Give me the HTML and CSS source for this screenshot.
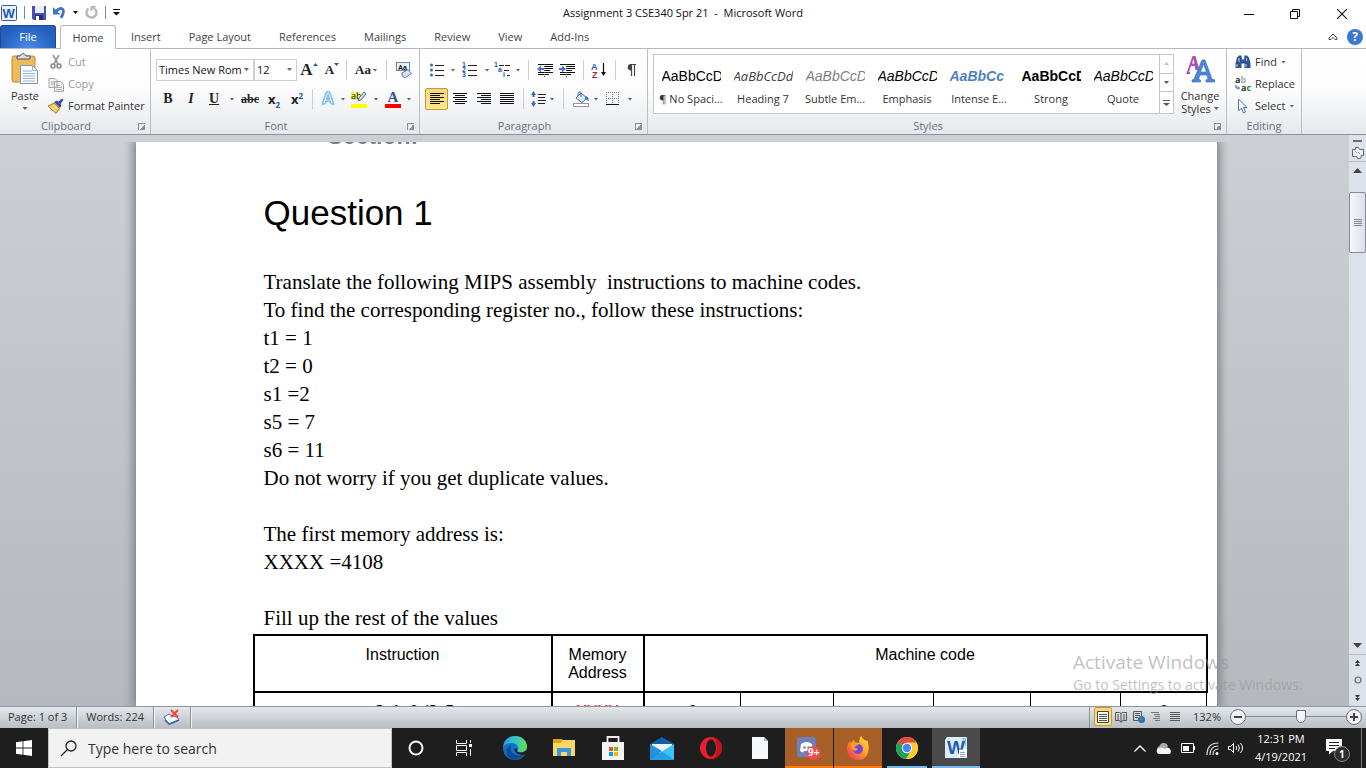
FILE: index.html
```
<!DOCTYPE html>
<html lang="en">
<head>
    <meta charset="UTF-8">
    <meta name="viewport" content="width=device-width, initial-scale=1.0">
    <title>Assignment 3 CSE340 Spr 21 - Microsoft Word</title>
    <link rel="stylesheet" href="styles.css">
</head>
<body>
    <!-- Title bar -->
    <header class="titlebar">
        <div class="quick">
            <svg width="16" height="16" viewBox="0 0 16 16"><rect x=".5" y=".5" width="15" height="15" rx="1" fill="#eaf3fc" stroke="#2a5fa8"/><text x="1.500" y="13" class="svg-w">W</text></svg>
            <span class="quick-line"></span>
            <button class="tool" aria-label="Save"><svg width="14" height="14" viewBox="0 0 14 14"><path d="M0 0h14v14H1.500L0 12.500z" fill="#4a50b8"/><rect x="3" y="0" width="9" height="7" fill="#e6effb"/><rect x="3" y="9" width="8" height="5" fill="#2a2d66"/><rect x="4" y="10" width="3" height="4" fill="#fff"/></svg></button>
            <button class="tool" aria-label="Undo"><svg width="13" height="14" viewBox="0 0 13 14"><path d="M3 5.500Q7 1 9.500 3T8 12" fill="none" stroke="#3f74cc" stroke-width="2.800"/><path d="M0 1v7.500h7.500z" fill="#3f74cc"/></svg></button>
            <span class="arrow dark"></span>
            <button class="tool" aria-label="Repeat"><svg width="13" height="14" viewBox="0 0 13 14"><path d="M3.500 2.500a5 5 0 1 0 6 0" fill="none" stroke="#b9b9b9" stroke-width="2.500"/><path d="M5.500 6V0h6z" fill="#b9b9b9"/></svg></button>
            <span class="quick-line"></span>
            <button class="tool" aria-label="Customize toolbar"><svg width="7" height="7" viewBox="0 0 7 7"><path d="M0 0h7v1H0zM0 3h7L3.500 6.500z" fill="#111"/></svg></button>
        </div>
        <h1 class="caption">Assignment 3 CSE340 Spr 21 &nbsp;-&nbsp; Microsoft Word</h1>
        <div class="window-buttons">
            <button aria-label="Minimize"><svg width="10" height="10" viewBox="0 0 10 10"><path d="M0 5.500h10" stroke="#111"/></svg></button>
            <button aria-label="Restore"><svg width="10" height="10" viewBox="0 0 10 10"><path d="M.5 2.500h7v7h-7zM2.500 2.500v-2h7v7h-2" fill="none" stroke="#111"/></svg></button>
            <button aria-label="Close"><svg width="10" height="10" viewBox="0 0 10 10"><path d="M0 0l10 10M10 0L0 10" stroke="#111" stroke-width="1.100"/></svg></button>
        </div>
    </header>

    <nav class="tabs">
        <button class="file-tab">File</button>
        <button class="tab active">Home</button>
        <button class="tab">Insert</button>
        <button class="tab">Page Layout</button>
        <button class="tab">References</button>
        <button class="tab">Mailings</button>
        <button class="tab">Review</button>
        <button class="tab">View</button>
        <button class="tab">Add-Ins</button>
        <div class="tab-end">
            <button class="tool" aria-label="Minimize the ribbon"><svg width="10" height="8" viewBox="0 0 10 8"><path d="M1 5l4-4 4 4v1.500H7L5 4.500l-2 2H1z" fill="#fff" stroke="#444"/></svg></button>
            <button class="help" aria-label="Help">?</button>
        </div>
    </nav>

    <!-- Ribbon -->
    <section class="ribbon">
        <div class="group clipboard">
            <div class="group-body side">
                <button class="big-button paste">
                    <svg width="28" height="32" viewBox="0 0 28 32"><rect x="1" y="3" width="23" height="26" rx="2" fill="#eebb5c" stroke="#c08a2d"/><path d="M6 6V3h3q3-5 6 0h4v3z" fill="#d9dde2" stroke="#555"/><path d="M9.500 12.500h12l5 5v13h-17z" fill="#fafcff" stroke="#7d93b5"/><path d="M21.500 12.500v5h5M12 18h9M12 20.500h12M12 23h12M12 25.500h12M12 28h12" fill="none" stroke="#9db4d6"/></svg>
                    <span>Paste</span>
                    <span class="arrow"></span>
                </button>
                <div class="rows">
                    <button class="row-button disabled"><svg width="16" height="16" viewBox="0 0 16 16"><path d="M5 1l5 9M11 1l-5 9" stroke="#999" stroke-width="1.600"/><circle cx="5" cy="12" r="2" fill="none" stroke="#888" stroke-width="1.500"/><circle cx="11" cy="12" r="2" fill="none" stroke="#888" stroke-width="1.500"/></svg>Cut</button>
                    <button class="row-button disabled"><svg width="16" height="16" viewBox="0 0 16 16"><path d="M1 2.500h6l2 2v7H1zM6.500 5.500h6l3 3v7h-9z" fill="#f3f3f3" stroke="#a5a5a5"/><path d="M3 6h3M3 8h3M8 9.500h4M8 11.500h6M8 13.500h6" stroke="#aaa"/></svg>Copy</button>
                    <button class="row-button"><svg width="16" height="16" viewBox="0 0 16 16"><path d="M10 4l4-3.500 1.500 1.500-3 4z" fill="#41459b"/><path d="M6 4l3-1.500L13.500 7 12 10z" fill="#41459b"/><path d="M0 8l6-3 5.500 5.500L8 15.500z" fill="#e8cb58" stroke="#a48325"/><path d="M3 8.500l5 5M5.500 7l4 4.500" stroke="#fff6c4"/></svg>Format Painter</button>
                </div>
            </div>
            <div class="group-label">Clipboard<button class="launcher" aria-label="Clipboard options"></button></div>
        </div>

        <div class="group font">
            <div class="group-body">
                <div class="tools font-top">
                    <span class="combo"><select aria-label="Font"><option>Times New Roman</option></select><i class="arrow"></i></span>
                    <span class="combo"><select aria-label="Font size"><option>12</option></select><i class="arrow"></i></span>
                    <button class="tool serif grow" aria-label="Grow font">A<svg width="5" height="3" viewBox="0 0 5 3"><path d="M0 3h5L2.500 0z" fill="#2b57a6"/></svg></button>
                    <button class="tool serif shrink" aria-label="Shrink font">A<svg width="5" height="3" viewBox="0 0 5 3"><path d="M0 0h5L2.500 3z" fill="#2b57a6"/></svg></button>
                    <span class="sep"></span>
                    <button class="tool serif case">Aa</button><span class="arrow"></span>
                    <span class="sep"></span>
                    <button class="tool" aria-label="Clear formatting"><svg width="18" height="18" viewBox="0 0 18 18"><rect x="1.500" y="1.500" width="13" height="8" fill="#eef4fd" stroke="#6d87b5"/><text x="3" y="8.500" class="svg-tiny">Aa</text><path d="M7 12l6-3.500 3.500 4-6 4q-4 0-3.500-4.500z" fill="#d5e0f5" stroke="#6579a5"/></svg></button>
                </div>
                <div class="tools font-bottom">
                    <button class="tool serif bold">B</button>
                    <button class="tool serif italic">I</button>
                    <button class="tool serif under">U</button><span class="arrow"></span>
                    <button class="tool serif strike">abc</button>
                    <button class="tool script">x<sub>2</sub></button>
                    <button class="tool script">x<sup>2</sup></button>
                    <span class="sep"></span>
                    <button class="tool effects">A</button><span class="arrow"></span>
                    <button class="tool" aria-label="Highlight"><svg width="18" height="18" viewBox="0 0 18 18"><rect x="1" y="2" width="9" height="8" fill="#f4f06a"/><text x="1" y="9" class="svg-small">ab</text><path d="M8 11l1-3 5-6 2 2-5 6z" fill="#cfdbef" stroke="#5c6d8c"/><rect x="1" y="14" width="16" height="4" fill="#ffff00"/></svg></button><span class="arrow"></span>
                    <button class="tool font-color">A</button><span class="arrow"></span>
                </div>
            </div>
            <div class="group-label">Font<button class="launcher" aria-label="Font options"></button></div>
        </div>

        <div class="group paragraph">
            <div class="group-body">
                <div class="tools para-top">
                    <button class="tool" aria-label="Bullets"><svg width="14" height="14" viewBox="0 0 14 14"><g fill="#3a64ad"><circle cx="1.500" cy="2" r="1.500"/><circle cx="1.500" cy="7" r="1.500"/><circle cx="1.500" cy="12" r="1.500"/></g><path d="M5 2.500h9M5 7.500h9M5 12.500h9" stroke="#222"/></svg></button><span class="arrow"></span>
                    <button class="tool" aria-label="Numbering"><svg width="16" height="16" viewBox="0 0 16 16"><g class="svg-num"><text x="0" y="5">1</text><text x="0" y="10">2</text><text x="0" y="15">3</text></g><path d="M6 3.500h9M6 8.500h9M6 13.500h9" stroke="#222"/></svg></button><span class="arrow"></span>
                    <button class="tool" aria-label="Multilevel list"><svg width="18" height="16" viewBox="0 0 18 16"><g class="svg-num"><text x="0" y="5">1</text><text x="4" y="10">a</text><text x="9" y="15">i</text></g><path d="M5 3.500h12M10 8.500h6M13 13.500h3" stroke="#222" stroke-dasharray="5 1"/></svg></button><span class="arrow"></span>
                    <span class="sep"></span>
                    <button class="tool" aria-label="Decrease indent"><svg width="16" height="14" viewBox="0 0 16 14"><path d="M1 1.500h15M8 3.500h8M8 5.500h8M8 7.500h5M1 9.500h15M1 11.500h11" stroke="#111"/><path d="M7.500 1v13" stroke="#444" stroke-dasharray="1 1"/><path d="M0 6l4-3.500V5h3v2H4v2.500z" fill="#3e78d8"/></svg></button>
                    <button class="tool" aria-label="Increase indent"><svg width="16" height="14" viewBox="0 0 16 14"><path d="M1 1.500h15M8 3.500h8M8 5.500h8M8 7.500h5M1 9.500h15M1 11.500h11" stroke="#111"/><path d="M7.500 1v13" stroke="#444" stroke-dasharray="1 1"/><path d="M7 6L3 2.500V5H0v2h3v2.500z" fill="#3e78d8"/></svg></button>
                    <span class="sep"></span>
                    <button class="tool" aria-label="Sort"><svg width="16" height="16" viewBox="0 0 16 16"><text x="0" y="8" class="svg-az">A</text><text x="1" y="16" class="svg-az red">Z</text><path d="M12.500 1v11" stroke="#111" stroke-width="1.200"/><path d="M10 10h5l-2.500 4z" fill="#111"/></svg></button>
                    <span class="sep"></span>
                    <button class="tool" aria-label="Show marks"><svg width="12" height="14" viewBox="0 0 12 14"><path d="M11 1.500H5M6.500 1v12M9.500 1v12" stroke="#444" stroke-width="1.200"/><path d="M6 1a3 3 0 0 0 0 6.500z" fill="#444"/></svg></button>
                </div>
                <div class="tools para-bottom">
                    <button class="tool chosen" aria-label="Align left"><svg width="14" height="12" viewBox="0 0 14 12"><path d="M0 .5h14M0 2.500h10M0 4.500h14M0 6.500h10M0 8.500h14M0 10.500h10" stroke="#111"/></svg></button>
                    <button class="tool" aria-label="Center"><svg width="14" height="12" viewBox="0 0 14 12"><path d="M0 .5h14M2 2.500h10M0 4.500h14M2 6.500h10M0 8.500h14M2 10.500h10" stroke="#111"/></svg></button>
                    <button class="tool" aria-label="Align right"><svg width="14" height="12" viewBox="0 0 14 12"><path d="M0 .5h14M4 2.500h10M0 4.500h14M4 6.500h10M0 8.500h14M4 10.500h10" stroke="#111"/></svg></button>
                    <button class="tool" aria-label="Justify"><svg width="14" height="12" viewBox="0 0 14 12"><path d="M0 .5h14M0 2.500h14M0 4.500h14M0 6.500h14M0 8.500h14M0 10.500h14" stroke="#111"/></svg></button>
                    <span class="sep"></span>
                    <button class="tool" aria-label="Line spacing"><svg width="15" height="16" viewBox="0 0 15 16"><path d="M2.500 0L5 4H3.500v2h-2V4H0zM2.500 16L5 12H3.500v-2h-2v2H0z" fill="#3765b5"/><path d="M7 3.500h8M7 6.500h7M7 9.500h8M7 12.500h7" stroke="#222"/></svg></button><span class="arrow"></span>
                    <span class="sep"></span>
                    <button class="tool" aria-label="Shading"><svg width="17" height="16" viewBox="0 0 17 16"><path d="M3 7l5-5 6 5-5 4.500z" fill="#dfe9f8" stroke="#49648f"/><path d="M8 6V1.500q-2-2-3 1V5" fill="none" stroke="#49648f"/><path d="M12.500 5q4 1 3 5.500Q14 8 12 8z" fill="#3b6fc0"/><rect x=".5" y="12.500" width="15" height="3" fill="#fff" stroke="#999"/></svg></button><span class="arrow"></span>
                    <button class="tool" aria-label="Borders"><svg width="14" height="14" viewBox="0 0 14 14"><path d="M0 .5h13M0 6.500h13M.5 0v13M6.500 0v13M12.500 0v13" stroke="#777" stroke-dasharray="1 1"/><path d="M0 12.500h13" stroke="#111"/></svg></button><span class="arrow"></span>
                </div>
            </div>
            <div class="group-label">Paragraph<button class="launcher" aria-label="Paragraph options"></button></div>
        </div>

        <div class="group styles">
            <div class="group-body side">
                <div class="gallery">
                    <button class="style"><span class="sample">AaBbCcDd</span><span>¶ No Spaci...</span></button>
                    <button class="style"><span class="sample heading7">AaBbCcDd</span><span>Heading 7</span></button>
                    <button class="style"><span class="sample subtle">AaBbCcDd</span><span>Subtle Em...</span></button>
                    <button class="style"><span class="sample emphasis">AaBbCcDd</span><span>Emphasis</span></button>
                    <button class="style"><span class="sample intense">AaBbCc</span><span>Intense E...</span></button>
                    <button class="style"><span class="sample strong">AaBbCcD</span><span>Strong</span></button>
                    <button class="style"><span class="sample emphasis">AaBbCcDd</span><span>Quote</span></button>
                    <div class="gallery-nav">
                        <button aria-label="Previous row"><svg width="5" height="3" viewBox="0 0 5 3"><path d="M0 3h5L2.500 0z" fill="#bbb"/></svg></button>
                        <button aria-label="Next row"><svg width="5" height="3" viewBox="0 0 5 3"><path d="M0 0h5L2.500 3z" fill="#555"/></svg></button>
                        <button aria-label="More styles"><svg width="7" height="6" viewBox="0 0 7 6"><path d="M0 0h7v1H0zM0 3h7L3.500 6z" fill="#555"/></svg></button>
                    </div>
                </div>
                <button class="big-button change">
                    <svg width="30" height="30" viewBox="0 0 30 30"><path d="M1 20l1-2 5.500-16h3l4 14h-4l-.8-4H6l-2 6h1v2zM7 9.500h2.500L8.500 5z" fill="#b04fb5" fill-rule="evenodd"/><path d="M7 28v-2l2-1 8-19h3l7 19 3 1v2h-9v-2l2-1-1-4h-7l-1.500 4 2 1v2zM15.500 18h6l-3-8z" fill="#4d86d8" stroke="#3466b8" stroke-width=".6" fill-rule="evenodd"/></svg>
                    <span>Change</span>
                    <span class="with-arrow">Styles <i class="arrow"></i></span>
                </button>
            </div>
            <div class="group-label">Styles<button class="launcher" aria-label="Style options"></button></div>
        </div>

        <div class="group editing">
            <div class="group-body side">
                <div class="rows">
                    <button class="row-button"><svg width="16" height="16" viewBox="0 0 16 16"><path d="M2 3.500L4 1.500h2.500l.5 4h2l.5-4H12l2 2 1.500 6V14h-6V9.500h-3V14h-6V9.500z" fill="#2f5391"/><path d="M2 10v3M4 4v4M11 10v3M11.500 4v3" stroke="#a9c2e8" stroke-width="1.200"/></svg>Find<i class="arrow"></i></button>
                    <button class="row-button"><svg width="16" height="16" viewBox="0 0 16 16"><text x="0" y="7" class="svg-rep">a<tspan fill="#aaa">b</tspan></text><text x="6" y="15" class="svg-rep">a<tspan fill="#19901f">c</tspan></text><path d="M1 9v3h3M3 10.500L4.500 12 3 13.500" fill="none" stroke="#2c5ca6"/></svg>Replace</button>
                    <button class="row-button"><svg width="16" height="16" viewBox="0 0 16 16"><path d="M3.500 1v12l3-3 2 5 2-1-2-4.500h3.500z" fill="#f5f9ff" stroke="#54739f"/></svg>Select<i class="arrow"></i></button>
                </div>
            </div>
            <div class="group-label">Editing</div>
        </div>
    </section>

    <!-- Document -->
    <main class="workspace">
        <div class="canvas">
            <article class="page">
                <p class="section-line">Section:</p>
                <h2>Question 1</h2>
                <p>Translate the following MIPS assembly &nbsp;instructions to machine codes.</p>
                <p>To find the corresponding register no., follow these instructions:</p>
                <p>t1 = 1</p>
                <p>t2 = 0</p>
                <p>s1 =2</p>
                <p>s5 = 7</p>
                <p>s6 = 11</p>
                <p>Do not worry if you get duplicate values.</p>
                <p class="gap">The first memory address is:</p>
                <p>XXXX =4108</p>
                <p class="gap">Fill up the rest of the values</p>
                <table>
                    <colgroup><col class="c-inst"><col class="c-mem"><col class="c-1"><col class="c-2"><col class="c-3"><col class="c-4"><col class="c-5"><col class="c-6"></colgroup>
                    <tr class="head"><th>Instruction</th><th>Memory Address</th><th colspan="6">Machine code</th></tr>
                    <tr><td>sw $s1, 0 ($s5</td><td class="red">XXXX</td><td>6</td><td></td><td></td><td></td><td></td><td>6</td></tr>
                </table>
            </article>
        </div>
        <div class="scrollbar">
            <span class="split"></span>
            <button class="ruler" aria-label="View ruler"><svg width="12" height="12" viewBox="0 0 12 12"><path d="M.5 2.500h3v-2h3l1 2h4v6h-2l-1 3h-3l-1-2h-4z" fill="#eef0f5" stroke="#666"/><path d="M3 4l2 2M6 5l3 3" stroke="#666" stroke-dasharray="1 1"/></svg></button>
            <button class="step" aria-label="Scroll up"><svg width="9" height="5" viewBox="0 0 9 5"><path d="M0 5h9L4.500 0z" fill="#444"/></svg></button>
            <div class="track"><div class="thumb"></div></div>
            <button class="step" aria-label="Scroll down"><svg width="9" height="5" viewBox="0 0 9 5"><path d="M0 0h9L4.500 5z" fill="#444"/></svg></button>
            <div class="browse">
                <button aria-label="Previous page"><svg width="5" height="6" viewBox="0 0 5 6"><path d="M0 3h5L2.500 0zM0 6h5L2.500 3z" fill="#333"/></svg></button>
                <button aria-label="Browse object"><svg width="8" height="8" viewBox="0 0 8 8"><circle cx="4" cy="4" r="3" fill="none" stroke="#666" stroke-width="1.200"/></svg></button>
                <button aria-label="Next page"><svg width="5" height="6" viewBox="0 0 5 6"><path d="M0 0h5L2.500 3zM0 3h5L2.500 6z" fill="#333"/></svg></button>
            </div>
        </div>
        <div class="watermark"><strong>Activate Windows</strong><span>Go to Settings to activate Windows.</span></div>
    </main>

    <footer class="statusbar">
        <button class="status">Page: 1 of 3</button>
        <button class="status">Words: 224</button>
        <button class="status proof" aria-label="Proofing errors"><svg width="18" height="16" viewBox="0 0 18 16"><path d="M1 8l5-3 3 2 5 1 2 3-8 4-3-1z" fill="#fff" stroke="#4a76bb"/><path d="M2 11l4 4 10-4" fill="none" stroke="#3668b8" stroke-width="1.500"/><path d="M8 1l7 7M15 1L8 8" stroke="#f04a2c" stroke-width="2"/></svg></button>
        <div class="views">
            <button class="view chosen" aria-label="Print layout"><svg width="12" height="12" viewBox="0 0 12 12"><path d="M.5.5h11v11H.5z" fill="#fff" stroke="#444"/><path d="M2 3.500h8M2 5.500h8M2 7.500h8M2 9.500h8" stroke="#555"/></svg></button>
            <button class="view" aria-label="Full screen reading"><svg width="12" height="12" viewBox="0 0 12 12"><path d="M.5 1.500h4l1.500 1 1.500-1h4v8h-4l-1.500 2-1.500-2h-4zM6 2v9M2 4h2M2 6h2M2 8h2M8 4h2M8 6h2M8 8h2" fill="none" stroke="#555"/></svg></button>
            <button class="view" aria-label="Web layout"><svg width="12" height="12" viewBox="0 0 12 12"><path d="M.5.5h8v9h-8zM2 2.500h5M2 4.500h5M2 6.500h3" fill="none" stroke="#555"/><circle cx="8.500" cy="8.500" r="3.500" fill="#2f6cb5"/><path d="M7 7l2-1 1 2-2 2z" fill="#43a047"/></svg></button>
            <button class="view" aria-label="Outline"><svg width="12" height="12" viewBox="0 0 12 12"><path d="M0 1.500h8M3 3.500h6M4 5.500h5M2 7.500h7M4 9.500h5" stroke="#777"/></svg></button>
            <button class="view" aria-label="Draft"><svg width="12" height="12" viewBox="0 0 12 12"><path d="M1 1.500h10M1 3.500h10M1 5.500h10M1 7.500h10M1 9.500h10" stroke="#555"/></svg></button>
            <button class="zoom">132%</button>
            <button class="round" aria-label="Zoom out"><svg width="8" height="8" viewBox="0 0 8 8"><path d="M0 4h8" stroke="#444" stroke-width="2"/></svg></button>
            <input type="range" min="0" max="100" value="56" aria-label="Zoom">
            <button class="round" aria-label="Zoom in"><svg width="8" height="8" viewBox="0 0 8 8"><path d="M0 4h8M4 0v8" stroke="#444" stroke-width="2"/></svg></button>
        </div>
    </footer>

    <!-- Windows taskbar -->
    <div class="taskbar">
        <button class="start" aria-label="Start"><svg width="16" height="16" viewBox="0 0 16 16"><path d="M0 2.200L6.600 1.300v6.200H0zM7.400 1.200L16 0v7.500H7.400zM0 8.400h6.600v6.300L0 13.800zM7.400 8.400H16V16l-8.600-1.200z" fill="#fff"/></svg></button>
        <div class="search">
            <svg width="17" height="17" viewBox="0 0 17 17"><circle cx="11" cy="6" r="5" fill="none" stroke="#222" stroke-width="1.300"/><path d="M7.500 9.500L1 16" stroke="#222" stroke-width="1.300"/></svg>
            <input type="text" placeholder="Type here to search" aria-label="Search">
        </div>
        <button class="sys" aria-label="Cortana"><svg width="16" height="16" viewBox="0 0 16 16"><circle cx="8" cy="8" r="6.500" fill="none" stroke="#fff" stroke-width="2"/></svg></button>
        <button class="sys" aria-label="Task view"><svg width="16" height="16" viewBox="0 0 16 16"><path d="M.5 0v3.500h10V0M.5 16v-3.500h10V16M.5 5.500h10v5H.5zM14.500 0v3M14.500 9v7" fill="none" stroke="#fff"/><rect x="13" y="4" width="3" height="3" fill="#fff"/></svg></button>
        <div class="apps">
            <button class="app" aria-label="Edge"><svg width="24" height="24" viewBox="0 0 24 24"><defs><linearGradient id="edgeTop" x1="0" x2="1"><stop offset="0" stop-color="#2a9fe0"/><stop offset=".5" stop-color="#35c1c9"/><stop offset="1" stop-color="#6ae04b"/></linearGradient></defs><circle cx="12" cy="12" r="12" fill="#1371c5"/><path d="M0 11C1 4 6 0 12 0c7 0 12 5 12 10.500 0 4-3 6-6.500 6-2.500 0-4-1-3-2.500 2-3-1-7-6-7-4 0-7 2-8.500 4z" fill="url(#edgeTop)"/><path d="M8 9c-2 7 3 12 13 10-5 6-14 6-17 0-2-4 0-8 4-10z" fill="#0d4b97"/><path d="M14.500 14c-1 1.500 1 2.500 3 2.500 2.500 0 4.500-1 6-3v4l-2.500 1.500c-5 0-9-2-9.500-5 0-2 3-2 3 0z" fill="#1f1f1f"/></svg></button>
            <button class="app" aria-label="File Explorer"><svg width="22" height="20" viewBox="0 0 22 20"><path d="M0 1h9l2 2h11v15H0z" fill="#e3a21a"/><path d="M0 5h8l2-3h12v16H0z" fill="#ffd869"/><path d="M4 18v-8h14v8h-4v-4H8v4z" fill="#3a97dc"/></svg></button>
            <button class="app" aria-label="Store"><svg width="24" height="24" viewBox="0 0 24 24"><path d="M6.500 7V1h11v6" fill="none" stroke="#f0f0f0" stroke-width="1.800"/><path d="M1 6h22v18H1z" fill="#f3f3f3"/><path d="M8 11h4v4H8z" fill="#f05125"/><path d="M13 11h4v4h-4z" fill="#7fbb00"/><path d="M8 16h4v4H8z" fill="#00a3ee"/><path d="M13 16h4v4h-4z" fill="#fdb900"/></svg></button>
            <button class="app" aria-label="Mail"><svg width="24" height="23" viewBox="0 0 24 23"><path d="M0 7l12-7 12 7v16H0z" fill="#0f5fae"/><path d="M2 7h20v9H2z" fill="#f2f2f2"/><path d="M0 7l12 7L0 23z" fill="#1f92e0"/><path d="M24 7v16H0l12-8.500z" fill="#36c3f5"/><path d="M12 14.500L24 23H0z" fill="#239fe6"/></svg></button>
            <button class="app" aria-label="Opera"><svg width="22" height="22" viewBox="0 0 22 22"><path d="M11 0a11 11 0 1 0 0 22 11 11 0 0 0 0-22zm0 2.500c2.800 0 5 4 5 8.500s-2.200 8.500-5 8.500-5-4-5-8.500 2.200-8.500 5-8.500z" fill="#ee1c2c" fill-rule="evenodd"/><path d="M13 0.200c6 1 9 5.800 9 10.800s-3 9.800-9 10.800c2.500-2 4-6 4-10.800S15.500 2.200 13 .2z" fill="#a50d1b" opacity=".6"/></svg></button>
            <button class="app" aria-label="Document"><svg width="16" height="22" viewBox="0 0 16 22"><path d="M0 0h12l4 4v18H0z" fill="#f6f7f9"/><path d="M12 0v4h4z" fill="#aeb4bb"/></svg></button>
            <button class="app alert" aria-label="Discord"><svg width="24" height="24" viewBox="0 0 24 24"><rect x="0" y="1" width="19" height="20" rx="3" fill="#6b80bd"/><path d="M4 8q5.500-4 11 0l1 7-3 1.500-1-1.500H7l-1 1.500L3 15z" fill="#fff"/><circle cx="7.500" cy="11.500" r="1.300" fill="#6b80bd"/><circle cx="11.500" cy="11.500" r="1.300" fill="#6b80bd"/><circle cx="16.500" cy="17" r="7" fill="#f04b4e"/><text x="11" y="20" class="svg-badge">9+</text></svg></button>
            <button class="app alert" aria-label="Firefox"><svg width="24" height="24" viewBox="0 0 24 24"><defs><linearGradient id="fox" x1="1" y1="0" x2="0" y2="1"><stop offset="0" stop-color="#ffe94a"/><stop offset=".5" stop-color="#ff9226"/><stop offset="1" stop-color="#f0256c"/></linearGradient></defs><path d="M12 24C5 24 1 19 1 13.500c0-4 1-6 2.500-8.500l1 2L8 3.500 8.500 6 13 7l1-6 1.500-1c1 4 3 3 5 5l.5-1c3 6 3 20-9 20z" fill="url(#fox)"/><circle cx="12" cy="13" r="5" fill="#7146e0"/><path d="M5 7q5-1 8 2-4 0-4 3 2 0 3 1-2 3-5 1-3-3-2-7z" fill="#ff9b2d"/></svg></button>
            <button class="app running" aria-label="Chrome"><svg width="22" height="22" viewBox="0 0 22 22"><circle cx="11" cy="11" r="11" fill="#fbcb2f"/><path d="M11 11L1.500 5.500a11 11 0 0 1 19 0z" fill="#dd4b3e"/><path d="M1.500 5.500a11 11 0 0 0 8.500 16.500l5.500-8.500L11 11z" fill="#1da361"/><path d="M10 22a11 11 0 0 0 10.500-16.500H11v5.500l4.500 2.500z" fill="#fbcb2f"/><circle cx="11" cy="11" r="5.200" fill="#fff"/><circle cx="11" cy="11" r="4.200" fill="#4587f4"/></svg></button>
            <button class="app current" aria-label="Word"><svg width="22" height="22" viewBox="0 0 22 22"><path d="M2 0h19q1 0 1 1v20H0V3z" fill="#dcecfb"/><path d="M17 1h4v9z" fill="#8fc1ee"/><text x="2" y="17" class="svg-w big">W</text><path d="M14 13l8-1v9h-8z" fill="#fff"/><path d="M15 15.500h5M15 17.500h5M15 19.500h5" stroke="#89aede"/></svg></button>
        </div>
        <div class="tray">
            <button aria-label="Hidden icons"><svg width="12" height="7" viewBox="0 0 12 7"><path d="M.5 6.500L6 1l5.500 5.500" fill="none" stroke="#fff" stroke-width="1.300"/></svg></button>
            <button aria-label="OneDrive"><svg width="16" height="11" viewBox="0 0 16 11"><path d="M2 8a3 3 0 0 1 1.500-5A4.500 4.500 0 0 1 12 3l-2 3z" fill="#aaa"/><path d="M3.500 11a3 3 0 0 1 .5-6q2-1 4.500 1l3-1.500A4 4 0 0 1 14 11z" fill="#f4f4f4"/></svg></button>
            <button aria-label="Battery"><svg width="15" height="10" viewBox="0 0 15 10"><path d="M.5.500h12v9H.5zM13.500 3v4" fill="none" stroke="#fff"/><rect x="2" y="3" width="6" height="5" fill="#fff"/></svg></button>
            <button aria-label="Network"><svg width="13" height="13" viewBox="0 0 13 13"><path d="M1 13Q1 1 12.500 1M4 13Q4 4 12.500 4M7 13q0-6 5.500-6" fill="none" stroke="#ddd" stroke-width="1.200"/><circle cx="11" cy="11.500" r="1.500" fill="#fff"/></svg></button>
            <button aria-label="Volume"><svg width="16" height="12" viewBox="0 0 16 12"><path d="M.5 4.500h2l3-3v9l-3-3h-2zM8 4q1.500 2 0 4M10 2.500q3 3.500 0 7M12.500 1q4 5 0 10" fill="none" stroke="#fff"/></svg></button>
            <div class="clock"><span>12:31 PM</span><span>4/19/2021</span></div>
            <button class="notify" aria-label="Notifications"><svg width="26" height="26" viewBox="0 0 26 26"><path d="M1 2h16v12H8l-4 3.500V14H1z" fill="#fff"/><path d="M4 5.500h10M4 8.500h10M4 11.500h6" stroke="#222"/><circle cx="17" cy="17" r="7.500" fill="#2d2d2d" stroke="#8b8b8b"/><text x="14" y="21" class="svg-badge">1</text></svg></button>
            <span class="peek"></span>
        </div>
    </div>
</body>
</html>
```

FILE: styles.css
```
* {
    box-sizing: border-box;
}

body {
    margin: 0;
    height: 100vh;
    display: flex;
    flex-direction: column;
    overflow: hidden;
    background: #fff;
    font-family: "Open Sans", "Noto Sans", sans-serif;
    font-size: 11px;
    line-height: 14px;
    color: #333;
}

button {
    margin: 0;
    padding: 0;
    border: 0;
    background: none;
    font: inherit;
    color: inherit;
    white-space: nowrap;
}

svg {
    display: block;
    flex: none;
}

.arrow {
    width: 5px;
    height: 3px;
    flex: none;
    justify-self: center;
    background: #666;
    clip-path: polygon(0 0, 100% 0, 50% 100%);
}

.arrow.dark {
    background: #111;
}

.tool {
    display: flex;
    align-items: center;
    justify-content: center;
    height: 22px;
}

/* title bar */
.titlebar {
    flex: none;
    height: 25px;
    display: grid;
    grid-template-columns: 1fr auto 1fr;
}

.quick {
    display: flex;
    align-items: center;
    gap: 7px;
    padding-left: 1px;
}

.quick-line {
    width: 1px;
    height: 13px;
    background: #888;
}

.caption {
    margin: 0;
    font-size: 11px;
    font-weight: 400;
    line-height: 25px;
    color: #111;
}

.window-buttons {
    display: flex;
    justify-content: flex-end;
}

.window-buttons button {
    width: 46px;
    display: grid;
    place-items: center;
    padding-top: 3px;
}

.window-buttons button:last-child {
    width: 48px;
}

/* ribbon tabs */
.tabs {
    flex: none;
    height: 24px;
    display: flex;
    align-items: stretch;
    border-bottom: 1px solid #b4b9bf;
}

.file-tab {
    width: 56px;
    margin-right: 4px;
    border: 1px solid #1d489b;
    border-bottom: 0;
    border-radius: 3px 3px 0 0;
    background: radial-gradient(ellipse at bottom, #4a8bea, #2560bd 70%);
    color: #fff;
}

.tab {
    padding: 0 14px;
    color: #444;
}

.tab.active {
    width: 56px;
    margin: 0 1px -1px 0;
    padding: 0;
    border: 1px solid #b4b9bf;
    border-bottom: 0;
    border-radius: 3px 3px 0 0;
    background: #fff;
}

.tab-end {
    display: flex;
    align-items: center;
    gap: 9px;
    margin-left: auto;
    padding-right: 3px;
}

.help {
    width: 16px;
    height: 16px;
    border-radius: 50%;
    background: #3c78d0;
    color: #fff;
    font-weight: 700;
    font-size: 12px;
}

/* ribbon */
.ribbon {
    flex: none;
    height: 86px;
    display: flex;
    border-bottom: 1px solid #8b929c;
    background: linear-gradient(#fff 0, #fdfdfe 45%, #e5e8ec 100%);
}

.group {
    display: flex;
    flex-direction: column;
    flex: none;
    border-right: 1px solid #b9bec5;
}

.clipboard { width: 151px; }
.font { width: 269px; }
.paragraph { width: 228px; }
.styles { width: 579px; }
.editing { width: 75px; }

.group-body {
    flex: 1;
    min-height: 0;
    display: flex;
    flex-direction: column;
    gap: 7px;
    padding: 10px 0 0 5px;
}

.group-body.side {
    flex-direction: row;
    gap: 0;
    padding-top: 2px;
}

.group-label {
    position: relative;
    flex: none;
    height: 17px;
    padding-right: 18px;
    text-align: center;
    line-height: 17px;
    color: #6a707a;
}

.editing .group-label {
    padding-right: 0;
}

.launcher {
    position: absolute;
    right: 5px;
    bottom: 4px;
    width: 7px;
    height: 7px;
    border-top: 1px solid #8a8f97;
    border-left: 1px solid #8a8f97;
    background: linear-gradient(135deg, transparent 50%, #8a8f97 50%);
}

.big-button {
    display: flex;
    flex-direction: column;
    align-items: center;
    align-self: flex-start;
}

.paste {
    width: 40px;
    padding-top: 2px;
}

.paste .arrow {
    margin-top: 4px;
}

.paste span:first-of-type {
    margin-top: 4px;
}

.rows {
    display: flex;
    flex-direction: column;
    padding-left: 3px;
}

.row-button {
    display: flex;
    align-items: center;
    gap: 4px;
    height: 22px;
}

.disabled {
    color: #999;
}

.tools {
    display: grid;
    align-items: center;
}

.font-top { grid-template-columns: 98px 43px 24px 22px 7px 21px 8px 14px 22px; }
.font-bottom { grid-template-columns: 24px 22px 24px 12px 24px 24px 22px 9px 22px 8px 24px 10px 24px 8px; }
.para-top { grid-template-columns: 24px 8px 26px 8px 23px 8px 12px 22px 22px 10px 22px 10px 22px; }
.para-bottom { grid-template-columns: 23px 24px 24px 22px 10px 20px 8px 14px 22px 8px 26px 8px; }

.sep {
    width: 1px;
    height: 20px;
    justify-self: center;
    background: #c9ced5;
}

.combo {
    position: relative;
    height: 22px;
}

.combo select {
    appearance: none;
    width: 100%;
    height: 22px;
    padding: 0 11px 0 2px;
    border: 1px solid #ccd0d5;
    border-radius: 0;
    background: #fff;
    font: inherit;
    color: #111;
}

.combo .arrow {
    position: absolute;
    right: 5px;
    top: 9px;
}

.serif {
    font-family: "Liberation Serif", serif;
    font-weight: 700;
    font-size: 14px;
    color: #222;
}

.grow { font-size: 17px; }
.shrink { font-size: 13px; }

.grow svg,
.shrink svg {
    align-self: flex-start;
    margin-top: 4px;
}

.case {
    justify-content: flex-end;
    font-size: 13px;
}

.italic { font-style: italic; }
.under { text-decoration: underline; }

.strike {
    font-size: 12px;
    text-decoration: line-through;
}

.script {
    font-weight: 700;
    font-size: 13px;
    color: #222;
}

.script sub,
.script sup {
    font-size: 8px;
    line-height: 8px;
    color: #2b57a6;
}

.script sub {
    align-self: flex-end;
    padding-bottom: 1px;
}

.script sup {
    align-self: flex-start;
    padding-top: 4px;
}

.effects {
    font-family: "Liberation Sans", sans-serif;
    font-weight: 700;
    font-size: 17px;
    color: #fff;
    -webkit-text-stroke: 1px #6fb0dd;
    text-shadow: 0 0 3px #7cc4ee;
}

.font-color {
    justify-self: center;
    width: 16px;
    height: 18px;
    border-bottom: 4px solid #f00;
    font-family: "Liberation Serif", serif;
    font-weight: 700;
    font-size: 15px;
    color: #2e4f8f;
}

.chosen {
    border: 1px solid #c29a3a;
    border-radius: 2px;
    background: linear-gradient(#fbd779, #fee68d);
}

.svg-tiny { font: 700 7px "Liberation Sans", sans-serif; fill: #111; }
.svg-small { font: 9px "Open Sans", sans-serif; fill: #111; }
.svg-num { font: 700 7px "Liberation Sans", sans-serif; fill: #2b57a6; }
.svg-az { font: 700 9px "Liberation Sans", sans-serif; fill: #2e5aa8; }
.svg-az.red { fill: #a33030; }
.svg-rep { font: 700 9px "Open Sans", sans-serif; fill: #333; }
.svg-badge { font: 700 10px "Open Sans", sans-serif; fill: #fff; }
.svg-w { font: 700 13px "Liberation Sans", sans-serif; fill: #1d5cae; }
.svg-w.big { font-size: 19px; }

/* style gallery */
.gallery {
    display: flex;
    width: 521px;
    height: 60px;
    margin-top: 3px;
    padding-left: 1px;
    border: 1px solid #c3c7cc;
    background: #fff;
}

.styles .group-body {
    gap: 5px;
}

.style {
    display: flex;
    flex-direction: column;
    align-items: center;
    justify-content: flex-start;
    gap: 6px;
    width: 72px;
    padding-top: 11px;
}

.sample {
    width: 59px;
    height: 20px;
    overflow: hidden;
    text-align: left;
    line-height: 20px;
    font-family: "Liberation Sans", sans-serif;
    font-size: 14px;
    color: #000;
}

.heading7 {
    font-family: "Open Sans", sans-serif;
    font-style: italic;
    font-size: 13px;
    color: #404040;
}

.subtle { font-style: italic; color: #808080; }
.emphasis { font-style: italic; }
.intense { font-style: italic; font-weight: 700; color: #4f81bd; }
.strong { font-weight: 700; }

.gallery-nav {
    display: grid;
    flex: 1;
    border-left: 1px solid #c3c7cc;
}

.gallery-nav button {
    display: grid;
    place-items: center;
}

.gallery-nav button + button {
    border-top: 1px solid #c3c7cc;
}

.change {
    width: 42px;
    padding-top: 3px;
    line-height: 13px;
}

.change span:first-of-type {
    margin-top: 5px;
}

.with-arrow {
    display: flex;
    align-items: center;
    gap: 3px;
}

/* document area */
.workspace {
    position: relative;
    flex: 1;
    min-height: 0;
    display: flex;
}

.canvas {
    flex: 1;
    overflow: hidden;
    padding: 7px 0 0 3px;
    background: linear-gradient(#ccd0d5, #b5b9be);
}

.page {
    width: 80%;
    min-width: 1081px;
    height: 100%;
    margin: 0 auto;
    padding: 0 0 0 128px;
    overflow: hidden;
    background: #fff;
    box-shadow: 0 0 9px 3px #7d8187;
    clip-path: inset(0 -12px);
    font-family: "Liberation Serif", serif;
    font-size: 21px;
    line-height: 28px;
    color: #000;
}

.page p {
    margin: 0;
}

.page .section-line {
    margin: -20px 0 0 64px;
    font-family: "Liberation Sans", sans-serif;
    font-weight: 700;
    font-size: 23px;
    line-height: 28px;
    color: #808080;
}

.page h2 {
    margin: 43px 0 35px;
    font-family: "Liberation Sans", sans-serif;
    font-weight: 400;
    font-size: 35px;
    line-height: 40px;
}

.page .gap {
    margin-top: 28px;
}

table {
    width: 953px;
    margin: 2px 0 0 -11px;
    border-collapse: collapse;
    table-layout: fixed;
    font-family: "Liberation Sans", sans-serif;
    font-size: 16px;
    line-height: 18px;
}

.c-inst { width: 298px; }
.c-mem { width: 92px; }
.c-1 { width: 97px; }
.c-2 { width: 93px; }
.c-3 { width: 100px; }
.c-4 { width: 97px; }
.c-5 { width: 90px; }
.c-6 { width: 86px; }

th,
td {
    height: 57px;
    padding: 10px 12px 0;
    border: 1px solid #000;
    vertical-align: top;
    text-align: center;
    font-weight: 400;
}

th,
td:nth-child(-n+2) {
    border-width: 2px;
}

.red {
    color: #f00;
}

.watermark {
    position: absolute;
    right: 58px;
    bottom: 11px;
    width: 235px;
    display: flex;
    flex-direction: column;
    font-size: 14px;
    line-height: 20px;
    color: rgba(150, 150, 150, 0.6);
}

.watermark strong {
    font-weight: 400;
    font-size: 19px;
    line-height: 26px;
}

/* scroll bar */
.scrollbar {
    width: 17px;
    display: flex;
    flex-direction: column;
    align-items: stretch;
    padding-top: 3px;
    background: #dce1ea;
}

.scrollbar button {
    display: grid;
    place-items: center;
}

.split {
    width: 9px;
    height: 2px;
    margin: 2px auto 3px;
    background: #666c75;
}

.ruler {
    height: 17px;
    border-bottom: 1px solid #b4bac4;
}

.step {
    height: 17px;
}

.track {
    flex: 1;
    padding-top: 13px;
}

.thumb {
    height: 61px;
    border: 1px solid #858c98;
    border-radius: 2px;
    background:
        repeating-linear-gradient(#7e848e 0 1px, transparent 1px 2px) center / 8px 7px no-repeat,
        linear-gradient(90deg, #f5f7fa, #dde1e8);
}

.browse {
    display: grid;
    height: 52px;
    border-top: 1px solid #b4bac4;
}

/* status bar */
.statusbar {
    flex: none;
    height: 22px;
    display: flex;
    border-top: 1px solid #8b95a3;
    background: linear-gradient(#e4e8ec, #b9bec4);
}

.status {
    padding: 0 9px 2px;
    border-right: 1px solid #8d939b;
    box-shadow: 1px 0 #f0f2f4;
}

.status:first-child {
    padding-left: 8px;
}

.views {
    display: flex;
    align-items: center;
    margin-left: auto;
    padding: 0 4px 2px;
    border-left: 1px solid #8d939b;
}

.view {
    display: grid;
    place-items: center;
    width: 18px;
    height: 19px;
}

.zoom {
    width: 46px;
}

.round {
    display: grid;
    place-items: center;
    width: 16px;
    height: 16px;
    border: 1px solid #6c727a;
    border-radius: 50%;
    background: #f1f3f5;
}

.views input {
    appearance: none;
    width: 100px;
    height: 14px;
    margin: 0;
    background: linear-gradient(#858e9b, #858e9b) center / 100% 1px no-repeat;
}

.views input::-webkit-slider-thumb {
    appearance: none;
    width: 10px;
    height: 13px;
    border: 1px solid #6c727a;
    border-radius: 1px 1px 5px 5px;
    background: #f4f5f7;
}

/* taskbar */
.taskbar {
    flex: none;
    height: 40px;
    display: flex;
    background: #1f1e1e;
    color: #fff;
}

.start,
.sys,
.app {
    display: grid;
    place-items: center;
    width: 48px;
    height: 40px;
}

.search {
    display: flex;
    align-items: center;
    width: 344px;
    padding-left: 11px;
    gap: 9px;
    border: 1px solid #c4c4c4;
    background: #f2f2f2;
}

.search input {
    flex: 1;
    min-width: 0;
    border: 0;
    background: none;
    font: 14px "Open Sans", sans-serif;
}

.search input::placeholder {
    color: #333;
}

.apps {
    display: flex;
    gap: 1px;
    margin-left: 3px;
}

.alert {
    background: #a75f27;
    box-shadow: inset 0 -2px #ff7a05;
}

.running {
    background: linear-gradient(#76b9ed, #76b9ed) bottom / 40px 2px no-repeat;
}

.current {
    background: #4b4a4a;
    box-shadow: inset 0 -2px #76b9ed;
}

.tray {
    display: flex;
    margin-left: auto;
}

.tray button {
    display: grid;
    place-items: center;
    width: 24px;
}

.clock {
    display: flex;
    flex-direction: column;
    align-items: center;
    justify-content: center;
    width: 66px;
    font-size: 11px;
    line-height: 18px;
}

.tray .notify {
    width: 47px;
    padding-top: 3px;
}

.peek {
    width: 5px;
    border-left: 1px solid #777;
}
```
